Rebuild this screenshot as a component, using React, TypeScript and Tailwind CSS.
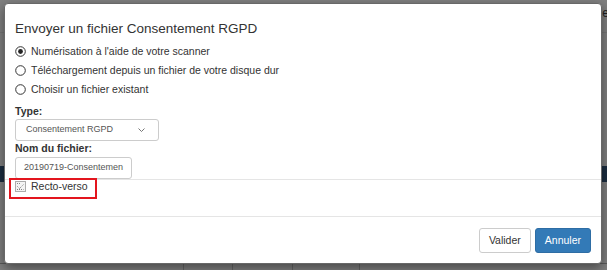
import React from "react";

function Radio({ checked }: { checked?: boolean }) {
  return (
    <svg width="11" height="11" viewBox="0 0 11 11" className="shrink-0">
      <circle cx="5.5" cy="5.5" r="4.8" fill="#fff" stroke="#333" strokeWidth="1" />
      {checked && <circle cx="5.5" cy="5.5" r="2.4" fill="#222" />}
    </svg>
  );
}

function DottedCheck() {
  return (
    <svg width="11" height="11" viewBox="0 0 11 11" className="shrink-0">
      <rect x="0.5" y="0.5" width="10" height="10" fill="#f4f4f4" stroke="#5e5e5e" strokeWidth="1" strokeDasharray="1 1" />
      <path d="M2.5 5.5 L4.5 7.5 L8.5 3.5" fill="none" stroke="#6e6e6e" strokeWidth="1" strokeDasharray="1 1" />
      <path d="M2 8.5 L8.5 8.5" fill="none" stroke="#808080" strokeWidth="1" strokeDasharray="1 1" />
      <path d="M2 2.5 L6 2.5" fill="none" stroke="#8a8a8a" strokeWidth="1" strokeDasharray="1 1" />
    </svg>
  );
}

export default function App() {
  return (
    <div className="relative w-[607px] h-[270px] overflow-hidden bg-[#808080] font-['Liberation_Sans',Arial,sans-serif] text-[#333]">
      {/* page behind overlay */}
      <div className="flex flex-col h-full">
        <div className="h-[33px] border-b border-[#767676] flex justify-end items-start pt-[6px]">
          <span className="text-[12px] leading-[14px] text-[#1c1c1c] mr-[-2px]">e</span>
        </div>
        <div className="h-[133px]" />
        <div className="h-[16px] bg-[#1b2d40]" />
        <div className="flex-1" />
        <div className="h-[7px] border-t border-[#5a5a5a] flex">
          <div className="w-[184px] border-r border-[#666]" />
          <div className="w-[49px] border-r border-[#666]" />
          <div className="w-[60px] border-r border-[#666]" />
          <div className="w-[67px] border-r border-[#666]" />
          <div className="flex-1" />
        </div>
      </div>

      {/* modal */}
      <div className="absolute left-[4px] top-[3px] w-[598px] h-[261px] bg-white rounded-[4px] border border-[#686868] shadow-[0_4px_12px_rgba(0,0,0,0.45)] flex flex-col">
        <div className="px-[10px] pt-[15px]">
          <h3 className="text-[13.5px] leading-[19px] font-normal text-[#333]">
            Envoyer un fichier Consentement RGPD
          </h3>
        </div>
        <div className="px-[10px] mt-[4px] flex flex-col">
          <div className="h-[19px] flex items-center gap-[5px] text-[10.5px]">
            <Radio checked />
            <span>Numérisation à l'aide de votre scanner</span>
          </div>
          <div className="h-[19px] flex items-center gap-[5px] text-[10.5px]">
            <Radio />
            <span>Téléchargement depuis un fichier de votre disque dur</span>
          </div>
          <div className="h-[19px] flex items-center gap-[5px] text-[10.5px]">
            <Radio />
            <span>Choisir un fichier existant</span>
          </div>

          <div className="mt-[5px] text-[10.5px] leading-[15px] font-bold">Type:</div>
          <div className="w-[144px] h-[22px] border border-[#ccc] rounded-[3px] flex items-center justify-between pl-[10px] pr-[13px]">
            <span className="text-[9px] text-[#555]">Consentement RGPD</span>
            <svg width="7" height="4" viewBox="0 0 7 4">
              <polyline points="0.5,0.5 3.5,3.5 6.5,0.5" fill="none" stroke="#666" strokeWidth="0.9" />
            </svg>
          </div>

          <div className="text-[10.5px] leading-[15px] font-bold">Nom du fichier:</div>
          <div className="mt-[1px] w-[117px] h-[22px] border border-[#ccc] rounded-[3px] flex items-center pl-[8px] overflow-hidden whitespace-nowrap">
            <span className="text-[9px] text-[#555]">20190719-Consentemen</span>
          </div>
          <div className="-mx-[10px] border-t border-[#e5e5e5]" />
          <div className="h-[13px] flex items-center gap-[5px] text-[10.5px]">
            <DottedCheck />
            <span>Recto-verso</span>
          </div>
        </div>
        <div className="flex-1" />
        <div className="border-t border-[#e5e5e5] pt-[11px] pb-[10px] pr-[10px] flex justify-end gap-[4px]">
          <button className="h-[25px] px-[9px] border border-[#ccc] rounded-[3px] bg-white text-[10.5px] text-[#333]">
            Valider
          </button>
          <button className="h-[25px] px-[9px] border border-[#2e6da4] rounded-[3px] bg-[#337ab7] text-[10.5px] text-white">
            Annuler
          </button>
        </div>
      </div>

      {/* annotation highlight */}
      <div className="absolute left-[9px] top-[178px] w-[88px] h-[21px] border-2 border-[#e3151e]" />
    </div>
  );
}
